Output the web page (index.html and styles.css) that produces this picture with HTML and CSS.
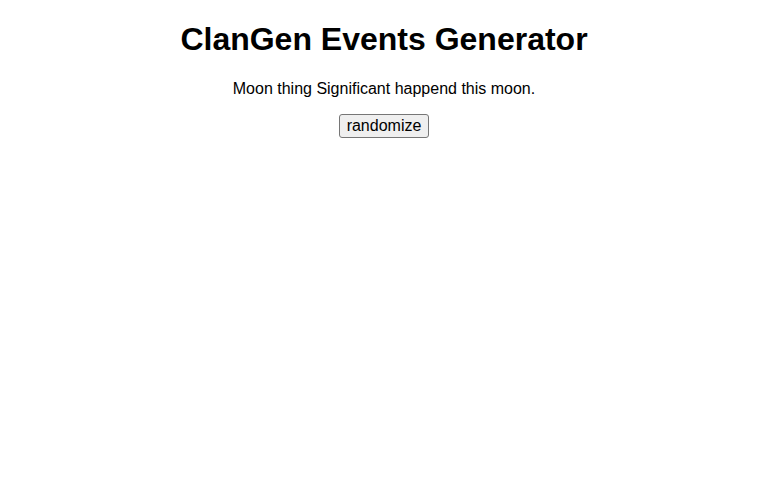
FILE: index.html
```html
<!doctype html>
<html lang="en">
  <head>
    <meta charset="UTF-8" />
    <meta name="viewport" content="width=device-width, initial-scale=1.0" />
    <title>ClanGen Events Generator</title>
    <link rel="stylesheet" href="styles.css">
  </head>
  <body>
    <h1 class="title">ClanGen Events Generator</h1>
    <p id="event" class="event">Moon thing Significant happend this moon.</p>
    <button id="randomizeBtn" class="btn">randomize</button>
  </body>
</html>
```

FILE: styles.css
```css
body {
  margin: 0;
  font-family: "Liberation Sans", Arial, sans-serif;
  text-align: center;
  color: #000;
  background: #fff;
}

.title {
  font-size: 2em;
  font-weight: 700;
}

.event {
  font-size: 1rem;
}

.btn {
  font-family: "Liberation Sans", Arial, sans-serif;
  font-size: 1rem;
  padding: 2px 7px;
  color: #000;
  background: #efefef;
  border: 1px solid #767676;
  border-radius: 3px;
}
```
